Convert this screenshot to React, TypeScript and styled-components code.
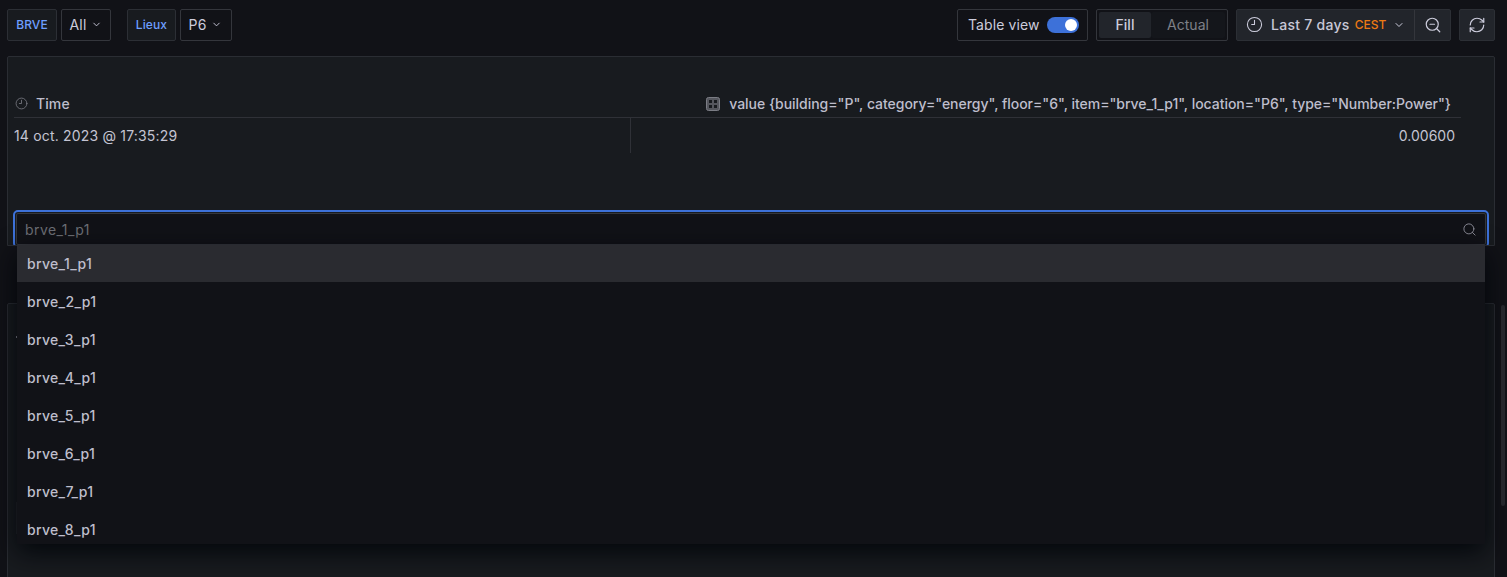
import { Clock9, ChevronDown, RefreshCw, Search, ZoomOut } from 'lucide-react'
import styled, { createGlobalStyle } from 'styled-components'

const GlobalStyle = createGlobalStyle`
  html, body {
    margin: 0;
    height: 100%;
    overflow: hidden;
    background: #111217;
  }
  * {
    box-sizing: border-box;
  }
`

const Page = styled.div`
  position: relative;
  height: 577px;
  overflow: hidden;
  padding: 0 12px 0 7px;
  color: #ccccdc;
  font-family: Inter, 'Liberation Sans', sans-serif;
  font-size: 14px;
`

const Toolbar = styled.div`
  display: flex;
  align-items: center;
  height: 56px;
  padding-bottom: 7px;
`

const VariableGroup = styled.div`
  display: flex;
  gap: 4px;
  margin-right: 16px;
`

const VariableLabel = styled.div<{ $width: number }>`
  display: flex;
  align-items: center;
  justify-content: center;
  width: ${(props) => props.$width}px;
  height: 32px;
  background: #181b1f;
  border: 1px solid #2c2f35;
  border-radius: 2px;
  color: #6e9fff;
  font-size: 12px;
  font-weight: 500;
  letter-spacing: 0.1px;
`

const VariableSelect = styled.div<{ $width: number }>`
  display: flex;
  align-items: center;
  gap: 4px;
  width: ${(props) => props.$width}px;
  height: 32px;
  padding-left: 7.5px;
  background: #111217;
  border: 1px solid #34363c;
  border-radius: 2px;
  color: #ccccdc;
  letter-spacing: 0.2px;
`

const Spacer = styled.div`
  flex: 1;
`

const ToggleBox = styled.div`
  display: flex;
  flex: 0 0 131px;
  align-items: center;
  gap: 7px;
  height: 32px;
  margin-right: 8px;
  padding-left: 10px;
  border: 1px solid #34363c;
  border-radius: 2px;
  letter-spacing: 0.1px;
`

const Switch = styled.div`
  position: relative;
  width: 32px;
  height: 16px;
  border-radius: 8px;
  background: #3d71d9;
  &::after {
    content: '';
    position: absolute;
    top: 2px;
    right: 2px;
    width: 12px;
    height: 12px;
    border-radius: 50%;
    background: #fff;
  }
`

const RadioGroup = styled.div`
  display: flex;
  flex: 0 0 132px;
  height: 32px;
  margin-right: 8px;
  padding: 2px;
  border: 1px solid #34363c;
  border-radius: 2px;
`

const RadioOption = styled.div<{ $active?: boolean }>`
  display: flex;
  align-items: center;
  justify-content: center;
  flex: ${(props) => (props.$active ? '0 0 52px' : '1')};
  border-radius: 2px;
  background: ${(props) => (props.$active ? '#22252b' : '#14161b')};
  color: ${(props) => (props.$active ? '#ccccdc' : '#7e8088')};
  font-weight: ${(props) => (props.$active ? 500 : 400)};
`

const TimePicker = styled.div`
  display: flex;
  flex: 0 0 215px;
  height: 32px;
  margin-right: 8px;
  background: #22252b;
  border: 1px solid #2c2f35;
  border-radius: 2px;
`

const TimeRange = styled.div`
  display: flex;
  align-items: center;
  width: 178px;
  padding-left: 9px;
  border-right: 1px solid #34363c;
`

const TimeText = styled.span`
  margin: 0 5px 0 8px;
  font-weight: 500;
  color: #c8c8d6;
  white-space: nowrap;
  letter-spacing: 0.28px;
`

const Zone = styled.span`
  margin-right: 7px;
  color: #ec7a14;
  font-size: 12px;
  font-weight: 500;
`

const IconCell = styled.div`
  display: flex;
  align-items: center;
  justify-content: center;
  width: 35px;
`

const RefreshButton = styled.div`
  display: flex;
  flex: 0 0 36px;
  align-items: center;
  justify-content: center;
  height: 32px;
  background: #22252b;
  border: 1px solid #2c2f35;
  border-radius: 2px;
`

const Panel = styled.section`
  width: 1488px;
  height: 190px;
  overflow: hidden;
  padding: 0 0 0 6px;
  background: #181b1f;
  border: 1px solid #2a2d33;
  border-radius: 2px 2px 0 0;
`

const Table = styled.div`
  width: 1447px;
  margin-top: 33px;
`

const HeaderRow = styled.div`
  display: grid;
  grid-template-columns: 617px 1fr;
  height: 28px;
  border-bottom: 1px solid #2f3137;
  font-weight: 500;
`

const HeaderCell = styled.div<{ $right?: boolean }>`
  display: flex;
  align-items: center;
  justify-content: ${(props) => (props.$right ? 'flex-end' : 'flex-start')};
  gap: ${(props) => (props.$right ? 9 : 8)}px;
  padding: ${(props) => (props.$right ? '0 10px 0 0' : '0 0 0 1px')};
  color: #bebecc;
  white-space: nowrap;
  letter-spacing: ${(props) => (props.$right ? '-0.03px' : '0.1px')};
`

const DataRow = styled.div`
  display: grid;
  grid-template-columns: 617px 1fr;
  height: 35px;
`

const TimeCell = styled.div`
  padding-top: 9px;
  border-right: 1px solid #2f3137;
  color: #c4c4d2;
  letter-spacing: 0.18px;
`

const ValueCell = styled.div`
  padding: 9px 6px 0 0;
  text-align: right;
  color: #c4c4d2;
`

const SearchBox = styled.div`
  display: flex;
  align-items: center;
  justify-content: space-between;
  width: 1470px;
  height: 32px;
  margin: 60px 0 0 2px;
  padding: 0 8px;
  background: #111217;
  border: 1px solid #34363c;
  border-radius: 2px;
  outline: 2px solid #3d71d9;
  outline-offset: 1px;
  color: #6c6e75;
  letter-spacing: 0.42px;
`

const LowerPanel = styled.section`
  display: flex;
  flex-direction: column;
  width: 1488px;
  height: 300px;
  margin-top: 57px;
  padding: 32px 0 0 8px;
  background: #181b1f;
  border: 1px solid #2a2d33;
  border-radius: 2px;
`

const Tick = styled.div`
  width: 2px;
  height: 2px;
  background: #8e8e9a;
`

const LegendBar = styled.div`
  width: 2px;
  height: 32px;
  margin-top: 164px;
  background: #24272c;
`

const Dropdown = styled.ul`
  position: absolute;
  top: 245px;
  left: 17px;
  width: 1468px;
  height: 299px;
  margin: 0;
  padding: 0;
  overflow: hidden;
  list-style: none;
  background: #111217;
  box-shadow: 0 8px 24px rgba(1, 4, 9, 0.9);
`

const Option = styled.li<{ $active?: boolean }>`
  display: flex;
  align-items: center;
  height: 38px;
  padding-left: 10px;
  background: ${(props) => (props.$active ? '#2a2b30' : 'transparent')};
  color: #bebecc;
  font-weight: 500;
  letter-spacing: 0.33px;
  &:first-child {
    height: 37px;
  }
`

const ScrollThumb = styled.div`
  position: absolute;
  top: 305px;
  right: 2px;
  width: 4px;
  height: 201px;
  border-radius: 2px;
  background: #24262b;
`

const CalcIcon = () => (
  <svg width="14" height="14" viewBox="0 0 14 14" fill="none">
    <rect x="0.5" y="0.5" width="13" height="13" rx="2" fill="#55575e" stroke="#7b7d85" />
    <rect x="3" y="3" width="3" height="3" fill="#181b1f" />
    <rect x="8" y="3" width="3" height="3" fill="#181b1f" />
    <rect x="3" y="8" width="3" height="3" fill="#181b1f" />
    <rect x="8" y="8" width="3" height="3" fill="#181b1f" />
  </svg>
)

const options = [1, 2, 3, 4, 5, 6, 7, 8].map((n) => `brve_${n}_p1`)

export default function App() {
  return (
    <>
      <GlobalStyle />
      <Page>
        <Toolbar>
          <VariableGroup>
            <VariableLabel $width={50}>BRVE</VariableLabel>
            <VariableSelect $width={50}>
              All <ChevronDown size={11} />
            </VariableSelect>
          </VariableGroup>
          <VariableGroup>
            <VariableLabel $width={49}>Lieux</VariableLabel>
            <VariableSelect $width={52}>
              P6 <ChevronDown size={11} />
            </VariableSelect>
          </VariableGroup>
          <Spacer />
          <ToggleBox>
            Table view
            <Switch />
          </ToggleBox>
          <RadioGroup>
            <RadioOption $active>Fill</RadioOption>
            <RadioOption>Actual</RadioOption>
          </RadioGroup>
          <TimePicker>
            <TimeRange>
              <Clock9 size={17} strokeWidth={1.5} />
              <TimeText>Last 7 days</TimeText>
              <Zone>CEST</Zone>
              <ChevronDown size={12} />
            </TimeRange>
            <IconCell>
              <ZoomOut size={18} strokeWidth={1.6} />
            </IconCell>
          </TimePicker>
          <RefreshButton>
            <RefreshCw size={18} strokeWidth={1.6} />
          </RefreshButton>
        </Toolbar>

        <Panel>
          <Table>
            <HeaderRow>
              <HeaderCell>
                <Clock9 size={13} strokeWidth={1.5} color="#7b7d85" />
                Time
              </HeaderCell>
              <HeaderCell $right>
                <CalcIcon />
                value {'{'}building="P", category="energy", floor="6", item="brve_1_p1", location="P6", type="Number:Power"{'}'}
              </HeaderCell>
            </HeaderRow>
            <DataRow>
              <TimeCell>14 oct. 2023 @ 17:35:29</TimeCell>
              <ValueCell>0.00600</ValueCell>
            </DataRow>
          </Table>
          <SearchBox>
            brve_1_p1
            <Search size={15} strokeWidth={1.5} color="#8e8e9a" />
          </SearchBox>
        </Panel>

        <LowerPanel>
          <Tick />
          <LegendBar />
        </LowerPanel>

        <Dropdown>
          {options.map((option, index) => (
            <Option key={option} $active={index === 0}>
              {option}
            </Option>
          ))}
        </Dropdown>
        <ScrollThumb />
      </Page>
    </>
  )
}
